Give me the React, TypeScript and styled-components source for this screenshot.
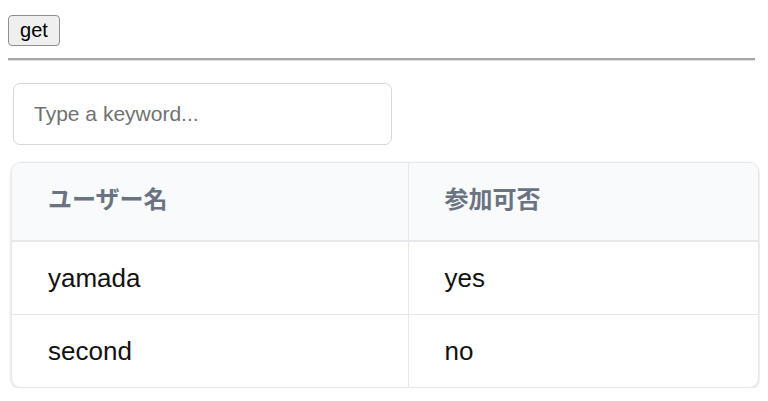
import { FC } from 'react';
import styled, { createGlobalStyle } from 'styled-components';

const GlobalStyle = createGlobalStyle`
  body {
    margin: 8px;
    background: #ffffff;
    font-family: 'Liberation Sans', Arial, 'Noto Sans CJK JP', sans-serif;
  }
`;

const Page = styled.div`
  width: 747px;
  display: flex;
  flex-direction: column;
`;

const GetButton = styled.button`
  align-self: flex-start;
  margin-top: 7px;
  height: 31px;
  width: 52px;
  padding: 0;
  font-family: 'Liberation Sans', Arial, sans-serif;
  font-size: 20px;
  color: #000;
  background: #efefef;
  border: 1px solid #8f8f8f;
  border-radius: 4px;
`;

const Divider = styled.hr`
  margin: 12px 0 0;
  height: 0;
  border: none;
  border-top: 2px solid #a8a8a8;
  border-bottom: 1px solid #e0e0e0;
`;

const SearchInput = styled.input`
  margin: 22px 0 0 5px;
  width: 379px;
  height: 62px;
  box-sizing: border-box;
  padding: 0 20px;
  font-family: 'Liberation Sans', Arial, sans-serif;
  font-size: 21px;
  color: #111;
  border: 1px solid #d6d8dc;
  border-radius: 7px;
  outline: none;

  &::placeholder {
    color: #717171;
  }
`;

const Card = styled.div`
  margin: 17px 0 0 3px;
  width: 748px;
  box-sizing: border-box;
  border: 1px solid #e7e8eb;
  border-radius: 10px;
  overflow: hidden;
  box-shadow: 0 1px 3px rgba(0, 0, 0, 0.18);
`;

const Table = styled.table`
  width: 100%;
  border-collapse: collapse;
  table-layout: fixed;
`;

const HeadCell = styled.th`
  height: 78px;
  padding: 0 0 8px 36px;
  box-sizing: border-box;
  text-align: left;
  background: #f9fafb;
  color: #6b7280;
  font-family: 'Noto Sans CJK JP', 'Liberation Sans', sans-serif;
  font-weight: 700;
  font-size: 24px;
  border-bottom: 2px solid #e6e8eb;

  & + & {
    border-left: 1px solid #e6e8eb;
  }
`;

const Row = styled.tr`
  & + & td {
    border-top: 1px solid #e6e8eb;
  }
`;

const Cell = styled.td`
  height: 72px;
  padding: 0 0 0 36px;
  color: #111111;
  font-family: 'Liberation Sans', Arial, sans-serif;
  font-size: 26px;

  & + & {
    border-left: 1px solid #e6e8eb;
  }
`;

const users = [
  { name: 'yamada', join: 'yes' },
  { name: 'second', join: 'no' },
];

const App: FC = () => (
  <>
    <GlobalStyle />
    <Page>
      <GetButton>get</GetButton>
      <Divider />
      <SearchInput placeholder="Type a keyword..." />
      <Card>
        <Table>
          <colgroup>
            <col style={{ width: 396 }} />
            <col />
          </colgroup>
          <thead>
            <tr>
              <HeadCell>ユーザー名</HeadCell>
              <HeadCell>参加可否</HeadCell>
            </tr>
          </thead>
          <tbody>
            {users.map((u) => (
              <Row key={u.name}>
                <Cell>{u.name}</Cell>
                <Cell>{u.join}</Cell>
              </Row>
            ))}
          </tbody>
        </Table>
      </Card>
    </Page>
  </>
);

export default App;
